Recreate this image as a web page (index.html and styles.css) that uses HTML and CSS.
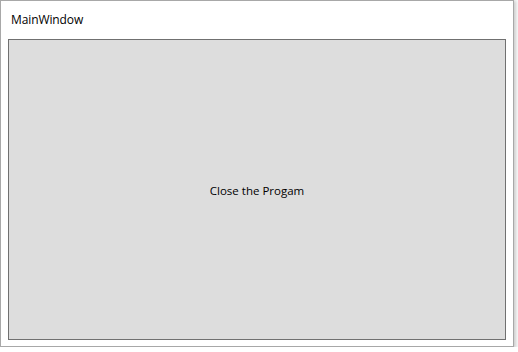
FILE: index.html
```html
<!DOCTYPE html>
<html>
<head>
<meta charset="utf-8">
<link rel="stylesheet" href="styles.css">
</head>
<body>
<div class="window">
  <div class="titlebar">MainWindow</div>
  <div class="client">
    <button class="btn">Close the Progam</button>
  </div>
</div>
</body>
</html>
```
FILE: styles.css
```css
html, body {
  margin: 0;
  padding: 0;
  background: #ffffff;
}
.window {
  box-sizing: border-box;
  width: 514px;
  height: 347px;
  border: 1px solid #a8a8a8;
  background: #ffffff;
  box-shadow: 1px 1px 4px 1px rgba(0, 0, 0, 0.22);
  display: flex;
  flex-direction: column;
  font-family: "Open Sans", "Noto Sans", sans-serif;
  font-size: 12px;
  color: #000;
}
.titlebar {
  height: 38px;
  flex: none;
  display: flex;
  align-items: center;
  padding-left: 10px;
  padding-bottom: 2px;
  box-sizing: border-box;
  letter-spacing: -0.1px;
}
.client {
  flex: 1;
  display: flex;
  padding: 0 7px 6px 7px;
}
.btn {
  flex: 1;
  margin: 0;
  border: 1px solid #707070;
  background: #dddddd;
  font-family: "Open Sans", "Noto Sans", sans-serif;
  font-size: 11.5px;
  color: #000;
  padding: 2px 0 0 0;
  border-radius: 0;
}
```
